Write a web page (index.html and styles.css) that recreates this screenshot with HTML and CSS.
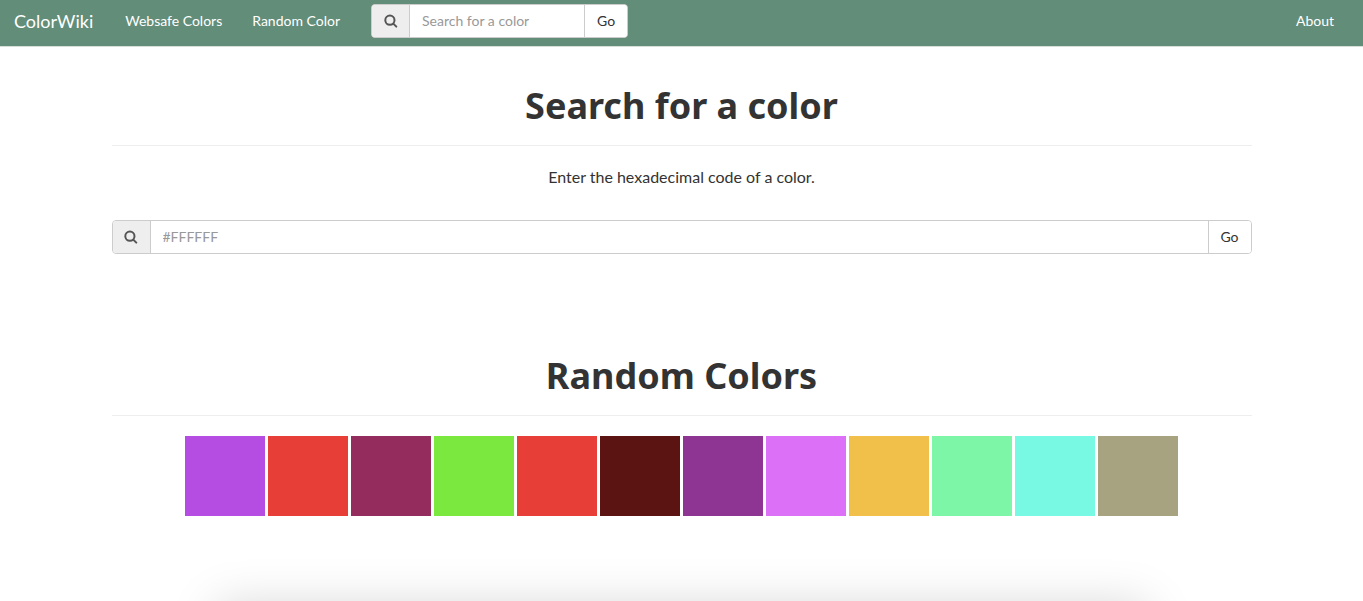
FILE: index.html
```html
<!DOCTYPE html>
<html lang="en">
<head>
	<meta charset="UTF-8">
	<meta name="viewport" content="width=device-width, initial-scale=1.0">
	<title>ColorWiki</title>
	<link rel="stylesheet" href="styles.css">
</head>
<body>
	<!-- navbar -->
	<nav class="navbar">
		<a class="brand" href="#">ColorWiki</a>
		<a class="nav-link" href="#">Websafe Colors</a>
		<a class="nav-link" href="#">Random Color</a>
		<form class="search nav-search">
			<label class="addon" for="nav-color" aria-label="Search">
				<svg class="icon" viewBox="0 0 14 14"><circle cx="5.9" cy="6.2" r="4.6"/><path d="M9.3 9.6l3 3"/></svg>
			</label>
			<input class="field" id="nav-color" type="text" placeholder="Search for a color">
			<button class="go" type="button">Go</button>
		</form>
		<a class="nav-link about" href="#">About</a>
	</nav>

	<div class="container">
		<!-- search by hex code -->
		<section class="section">
			<h1 class="title">Search for a color</h1>
			<p class="lead">Enter the hexadecimal code of a color.</p>
			<form class="search">
				<label class="addon" for="hex" aria-label="Hex code">
					<svg class="icon" viewBox="0 0 14 14"><circle cx="5.9" cy="6.2" r="4.6"/><path d="M9.3 9.6l3 3"/></svg>
				</label>
				<input class="field" id="hex" type="text" placeholder="#FFFFFF">
				<button class="go" type="button">Go</button>
			</form>
		</section>

		<!-- random colors -->
		<section class="section">
			<h1 class="title">Random Colors</h1>
			<div class="swatches">
				<a class="swatch purple" href="#"></a>
				<a class="swatch red" href="#"></a>
				<a class="swatch plum" href="#"></a>
				<a class="swatch lime" href="#"></a>
				<a class="swatch red" href="#"></a>
				<a class="swatch maroon" href="#"></a>
				<a class="swatch violet" href="#"></a>
				<a class="swatch pink" href="#"></a>
				<a class="swatch gold" href="#"></a>
				<a class="swatch mint" href="#"></a>
				<a class="swatch aqua" href="#"></a>
				<a class="swatch khaki" href="#"></a>
			</div>
		</section>

		<div class="panel"></div>
	</div>
</body>
</html>
```
FILE: styles.css
```css
* {
	box-sizing: border-box;
}

html,
body {
	height: 100%;
	margin: 0;
	overflow: hidden;
}

body {
	font-family: Lato, "Liberation Sans", sans-serif;
	font-size: 14px;
	line-height: 20px;
	color: #333;
	background: #fff;
}

/* navbar */
.navbar {
	display: flex;
	align-items: center;
	height: 47px;
	padding: 0 14px 4px;
	background: #628d79;
	border-bottom: 1px solid #d5dfd8;
}

.navbar a {
	color: #fff;
	text-decoration: none;
}

.brand {
	margin-right: 17px;
	font-size: 18px;
}

.nav-link {
	padding: 0 15px;
}

.nav-search {
	width: 257px;
	margin-left: 16px;
}

.about {
	margin-left: auto;
}

/* search box */
.search {
	display: flex;
	height: 34px;
	background: #fff;
	border: 1px solid #ccc;
	border-radius: 4px;
	overflow: hidden;
}

.addon {
	display: flex;
	align-items: center;
	justify-content: center;
	width: 38px;
	background: #eee;
	border-right: 1px solid #ccc;
}

.icon {
	width: 14px;
	height: 14px;
	fill: none;
	stroke: #555;
	stroke-width: 2;
	stroke-linecap: round;
}

.field {
	flex: 1;
	min-width: 0;
	padding: 0 12px;
	border: 0;
	font: inherit;
	color: #555;
	background: #fff;
}

.field::placeholder {
	color: #999;
}

.go {
	width: 43px;
	padding: 0;
	border: 0;
	border-left: 1px solid #ccc;
	font: inherit;
	color: #333;
	background: #fff;
}

/* content */
.container {
	max-width: 1170px;
	margin: 0 auto;
	padding: 0 15px;
}

.section {
	padding-top: 39px;
	margin-bottom: 63px;
	text-align: center;
}

.title {
	margin: 0 0 20px;
	padding-bottom: 19px;
	border-bottom: 1px solid #eee;
	font-family: "Noto Sans", "Open Sans", sans-serif;
	font-size: 36px;
	line-height: 40px;
	font-weight: bold;
}

.lead {
	margin: 0 0 32px;
	font-size: 16px;
	line-height: 22px;
}

.swatches {
	display: flex;
	justify-content: center;
	gap: 3px;
}

.swatch {
	width: 80px;
	height: 80px;
}

.purple { background: #b64de3; }
.red { background: #e83e38; }
.plum { background: #942c5e; }
.lime { background: #7ae83e; }
.maroon { background: #5b1411; }
.violet { background: #8e3492; }
.pink { background: #dc70f6; }
.gold { background: #f1c04a; }
.mint { background: #7df6a7; }
.aqua { background: #78f9e4; }
.khaki { background: #a7a280; }

/* panel with a soft shadow */
.panel {
	height: 300px;
	margin: 90px 105px 0;
	background: #fff;
	box-shadow: 0 0 45px rgba(0, 0, 0, 0.17);
}
```
